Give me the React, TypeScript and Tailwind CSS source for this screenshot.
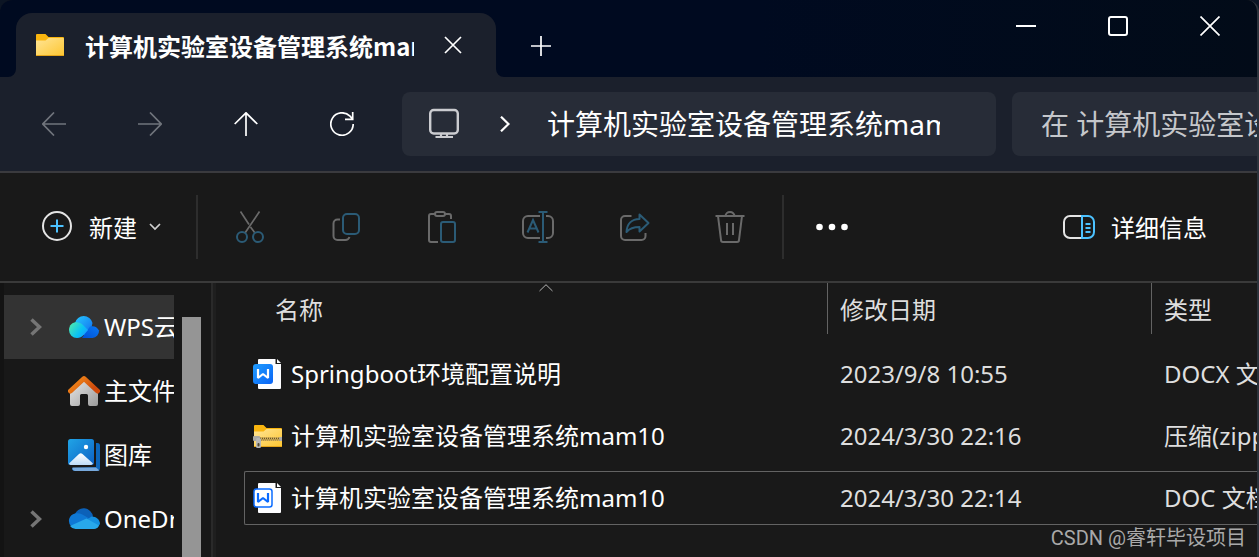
import type { ReactNode } from 'react';

const GRAY = '#6a6a6a';
const BLUE = '#2b5b76';

function Icon({ w = 32, h = 32, children }: { w?: number; h?: number; children: ReactNode }) {
  return (
    <svg
      width={w}
      height={h}
      viewBox={`0 0 ${w} ${h}`}
      fill="none"
      stroke="currentColor"
      strokeWidth="2"
      className="block shrink-0"
      aria-hidden="true"
    >
      {children}
    </svg>
  );
}

function FolderIcon({ zipped = false, id }: { zipped?: boolean; id: string }) {
  return (
    <svg width="30" height="24" viewBox="0 0 30 24" className="block shrink-0" aria-hidden="true">
      <defs>
        <linearGradient id={id} x1="0" y1="0" x2="1" y2="1">
          <stop offset="0" stopColor="#ffe596" />
          <stop offset="1" stopColor="#fdc631" />
        </linearGradient>
      </defs>
      <path d="M1 2a1 1 0 0 1 1-1h8.500l3 3H28a1 1 0 0 1 1 1v8H1z" fill="#f9b50f" />
      <path d="M1 7.500h9.500L13.500 5H28a1 1 0 0 1 1 1v16a1 1 0 0 1-1 1H2a1 1 0 0 1-1-1z" fill={`url(#${id})`} />
      <path d="M1 22.500h28" stroke="#e5a51a" />
      {zipped && (
        <>
          <path d="M6 15h23" stroke="#d9b357" strokeWidth="4" />
          <path d="M7 14.500h20" stroke="#67562b" strokeWidth="1.500" strokeDasharray="1 1" />
          <path d="M8 16h19" stroke="#8d7840" strokeWidth="1" strokeDasharray="1 1" />
          <rect x="26.500" y="13" width="2.500" height="4" fill="#a9a9a9" />
          <rect x="0" y="12" width="7" height="5" rx="1" fill="#aaa9a4" />
          <rect x="3" y="14" width="5" height="10" rx="1.500" fill="#b8b8b6" />
          <rect x="4.500" y="19" width="2" height="3.500" rx="1" fill="#4f4934" />
        </>
      )}
    </svg>
  );
}

function DocIcon({ outlined = false }: { outlined?: boolean }) {
  return (
    <svg width="30" height="32" viewBox="0 0 30 32" className="block shrink-0" aria-hidden="true">
      <defs>
        <linearGradient id="docBlue" x1="0" y1="0" x2="1" y2="1">
          <stop offset="0" stopColor="#1f9dff" />
          <stop offset="1" stopColor="#0a63f5" />
        </linearGradient>
      </defs>
      <path d="M5 2a1 1 0 0 1 1-1h16.500v5h5.500v24a1 1 0 0 1-1 1H6a1 1 0 0 1-1-1z" fill="#fdfdff" />
      <path d="M24 1v4h4z" fill="#fdfdff" />
      {outlined ? (
        <rect x="1" y="7" width="18" height="18" rx="2.500" fill="#fff" stroke="#0a6bff" strokeWidth="1.500" />
      ) : (
        <rect x="0" y="6" width="20" height="20" rx="3" fill="url(#docBlue)" />
      )}
      <path
        d="M5 11v9l5-4 5 4v-9"
        fill="none"
        stroke={outlined ? '#0a6bff' : '#fff'}
        strokeWidth="2.200"
        strokeLinejoin="bevel"
      />
    </svg>
  );
}

function WpsCloudIcon() {
  return (
    <svg width="32" height="32" viewBox="0 0 32 32" className="block shrink-0" aria-hidden="true">
      <defs>
        <linearGradient id="wpsA" x1="0" y1="0" x2="1" y2="1">
          <stop offset="0" stopColor="#24c9ff" />
          <stop offset="1" stopColor="#1268ee" />
        </linearGradient>
        <linearGradient id="wpsB" x1="0" y1="0" x2="1" y2="0.600">
          <stop offset="0" stopColor="#55eca5" />
          <stop offset="0.700" stopColor="#08c2f5" />
          <stop offset="1" stopColor="#18a0ff" />
        </linearGradient>
        <linearGradient id="wpsC" x1="0" y1="1" x2="1" y2="0">
          <stop offset="0" stopColor="#0050d5" />
          <stop offset="1" stopColor="#0878f5" />
        </linearGradient>
      </defs>
      <path d="M7 12a9 9 0 0 1 17.500 0l-3 12H12z" fill="url(#wpsA)" />
      <path d="M14 27l8-11.500a8 8 0 0 1 9 4A7 7 0 0 1 24.500 27z" fill="url(#wpsC)" />
      <path d="M9 27a8 8 0 0 1-8-8c0-8 9-10 14-5l5 5-5 5.500C13.500 26 12 27 9 27z" fill="url(#wpsB)" />
    </svg>
  );
}

function HomeIcon() {
  return (
    <svg width="32" height="32" viewBox="0 0 32 32" className="block shrink-0" aria-hidden="true">
      <defs>
        <linearGradient id="roof" x1="0" y1="0" x2="1" y2="0.500">
          <stop offset="0" stopColor="#f7931c" />
          <stop offset="1" stopColor="#cf4a0c" />
        </linearGradient>
        <linearGradient id="wall" x1="0" y1="0" x2="1" y2="1">
          <stop offset="0" stopColor="#ececec" />
          <stop offset="1" stopColor="#9b9b9b" />
        </linearGradient>
      </defs>
      <path
        d="M2 15.500L16 3l14 12.500V29a2 2 0 0 1-2 2h-6a2 2 0 0 1-2-2V20.500a1.500 1.500 0 0 0-1.500-1.500h-5a1.500 1.500 0 0 0-1.500 1.500V29a2 2 0 0 1-2 2H4a2 2 0 0 1-2-2z"
        fill="url(#wall)"
      />
      <path d="M2.500 16L16 3.500 29.500 16" fill="none" stroke="url(#roof)" strokeWidth="5" strokeLinejoin="round" strokeLinecap="round" />
    </svg>
  );
}

function GalleryIcon() {
  return (
    <svg width="32" height="32" viewBox="0 0 32 32" className="block shrink-0" aria-hidden="true">
      <defs>
        <linearGradient id="pic" x1="0" y1="0" x2="1" y2="1">
          <stop offset="0" stopColor="#20a4e6" />
          <stop offset="1" stopColor="#0d62c5" />
        </linearGradient>
        <linearGradient id="mount" x1="0" y1="0" x2="0" y2="1">
          <stop offset="0" stopColor="#ffffff" />
          <stop offset="1" stopColor="#bfdcf8" />
        </linearGradient>
      </defs>
      <path d="M28 4h1.500A2.500 2.500 0 0 1 32 6.500V29a3 3 0 0 1-3 3H7a3 3 0 0 1-3-3l24-1z" fill="#0c66bb" />
      <path d="M4.500 28.500H28l3.500 3L29 32H7a3 3 0 0 1-2.500-3.500z" fill="#78a9dc" />
      <rect x="0" y="0" width="28" height="28" fill="#191919" />
      <rect x="0" y="0" width="26" height="26" rx="2.500" fill="url(#pic)" />
      <path d="M1 24.500L11 15a2.500 2.500 0 0 1 3.500 0l10.500 9.500q-1 1.500-2.500 1.500H3q-1.500 0-2-1.500z" fill="url(#mount)" />
      <circle cx="18" cy="8" r="2.200" fill="#fff" />
    </svg>
  );
}

function OneDriveIcon() {
  return (
    <svg width="32" height="32" viewBox="0 0 32 32" className="block shrink-0" aria-hidden="true">
      <path d="M6.500 12A9.500 9.500 0 0 1 25 13.500L19 19z" fill="#0c61b8" />
      <path d="M3 23a7.500 7.500 0 0 1 4-12.500c4-.8 7 .5 10 2.500l5 3-12 7z" fill="#0f78d4" />
      <path d="M17 18l6.500-4.500c5 0 8.500 3.500 8.500 7.500l-3 4z" fill="#1590df" />
      <path d="M2 23l16.500-7.500L31 22.500A6 6 0 0 1 26 26H7.500A7 7 0 0 1 2 23z" fill="#28a8ea" />
    </svg>
  );
}

const navButtons: { label: string; dim?: boolean; art: ReactNode }[] = [
  { label: '后退', dim: true, art: <path d="M12 .5L.8 12 12 23.500M1 12h23" strokeWidth="1.700" /> },
  { label: '前进', dim: true, art: <path d="M12 .5L23.200 12 12 23.500M23 12H0" strokeWidth="1.700" /> },
  { label: '向上', art: <path d="M.7 12L12 .8 23.300 12M12 1v23" strokeWidth="1.700" /> },
  {
    label: '刷新',
    art: <path d="M23.200 12A11.200 11.200 0 1 1 20 4.200L22.500 7M22.700 0v7.300H15" strokeWidth="1.700" />,
  },
];

const tools: { label: string; art: ReactNode }[] = [
  {
    label: '剪切',
    art: (
      <>
        <path d="M6.500 .5l8.500 13M16.500 16l4.500 6M25.500 .5L11 22" stroke={GRAY} strokeWidth="1.700" />
        <circle cx="8" cy="26" r="5" stroke={BLUE} />
        <circle cx="24" cy="26" r="5" stroke={BLUE} />
      </>
    ),
  },
  {
    label: '复制',
    art: (
      <>
        <path d="M10 8.500H7.500a4 4 0 0 0-4 4V25a4 4 0 0 0 4 4H15a4.500 4.500 0 0 0 4.500-3" stroke={GRAY} />
        <rect x="13" y="3" width="16" height="20" rx="4" stroke={BLUE} />
      </>
    ),
  },
  {
    label: '粘贴',
    art: (
      <>
        <path d="M9 3H5a2 2 0 0 0-2 2v24a2 2 0 0 0 2 2h7M19 3h4a2 2 0 0 1 2 2v3" stroke={GRAY} />
        <rect x="9" y="1" width="10" height="4" rx="2" stroke={GRAY} />
        <rect x="15" y="11" width="14" height="20" rx="2" stroke={BLUE} />
      </>
    ),
  },
  {
    label: '重命名',
    art: (
      <>
        <path d="M18 5H6a5 5 0 0 0-5 5v12a5 5 0 0 0 5 5h12M24 5h2a5 5 0 0 1 5 5v12a5 5 0 0 1-5 5h-2" stroke={GRAY} />
        <path d="M16.500 1h9M21 1v30M16.500 31h9M5.500 21.500L11 9l5.500 12.500M7.500 17.500h7" stroke={BLUE} />
      </>
    ),
  },
  {
    label: '共享',
    art: (
      <>
        <path d="M13.500 5H7a4 4 0 0 0-4 4v16a4 4 0 0 0 4 4h16.500a4 4 0 0 0 4-4v-3" stroke={GRAY} />
        <path d="M21.500 3.500l9 8.500-9 8.500V16C15.500 16 11.500 17.500 8.500 21c.5-8 5-13 13-13z" stroke={BLUE} strokeLinejoin="round" />
      </>
    ),
  },
  {
    label: '删除',
    art: (
      <path
        d="M1.500 5h29M11.500 5a4.500 4 0 0 1 9 0M4 5l3 24a2 2 0 0 0 2 2h14a2 2 0 0 0 2-2l3-24M13 12v12M19 12v12"
        stroke={GRAY}
      />
    ),
  },
];

const places = [
  { name: 'WPS云盘', icon: <WpsCloudIcon />, expandable: true, active: true },
  { name: '主文件夹', icon: <HomeIcon /> },
  { name: '图库', icon: <GalleryIcon /> },
  { name: 'OneDrive', icon: <OneDriveIcon />, expandable: true },
];

const files = [
  { name: 'Springboot环境配置说明', date: '2023/9/8 10:55', type: 'DOCX 文档', icon: <DocIcon /> },
  { name: '计算机实验室设备管理系统mam10', date: '2024/3/30 22:16', type: '压缩(zipped)文件夹', icon: <FolderIcon zipped id="zipFolder" /> },
  { name: '计算机实验室设备管理系统mam10', date: '2024/3/30 22:14', type: 'DOC 文档', icon: <DocIcon outlined />, focused: true },
];

function TitleBar() {
  return (
    <header className="flex h-[77px] bg-linear-to-r from-[#000a20] from-60% to-[#020b18] pl-4">
      <div className="relative mt-[13px] flex h-16 w-[480px] shrink-0 items-center rounded-t-2xl bg-[#1b202c] pl-[19px]">
        <svg width="8" height="8" viewBox="0 0 8 8" className="absolute bottom-0 -left-2" aria-hidden="true">
          <path d="M8 0a8 8 0 0 1-8 8h8z" fill="#1b202c" />
        </svg>
        <svg width="8" height="8" viewBox="0 0 8 8" className="absolute -right-2 bottom-0" aria-hidden="true">
          <path d="M0 0a8 8 0 0 0 8 8H0z" fill="#1b202c" />
        </svg>
        <FolderIcon id="tabFolder" />
        <span className="ml-5 w-[329px] overflow-hidden pt-0.5 font-['Noto_Sans_CJK_SC',sans-serif] text-2xl font-bold whitespace-nowrap text-white">
          计算机实验室设备管理系统mam10
        </span>
        <button type="button" aria-label="关闭标签页" className="ml-[15px] flex size-12 items-center justify-center text-white">
          <Icon w={18} h={18}>
            <path d="M1 1l16 16M17 1L1 17" strokeWidth="1.700" />
          </Icon>
        </button>
      </div>
      <button type="button" aria-label="新建标签页" className="mt-[22px] ml-[21px] flex size-12 items-center justify-center text-white">
        <Icon w={20} h={20}>
          <path d="M10 0v20M0 10h20" strokeWidth="1.700" />
        </Icon>
      </button>
      <div className="ml-auto flex pr-px text-white">
        <button type="button" aria-label="最小化" className="flex h-[52px] w-[92px] items-center justify-center">
          <Icon w={20} h={20}>
            <path d="M0 10h20" />
          </Icon>
        </button>
        <button type="button" aria-label="最大化" className="flex h-[52px] w-[92px] items-center justify-center">
          <Icon w={20} h={20}>
            <rect x="1" y="1" width="18" height="18" rx="2" />
          </Icon>
        </button>
        <button type="button" aria-label="关闭" className="flex h-[52px] w-[92px] items-center justify-center">
          <Icon w={20} h={20}>
            <path d="M.5 .5l19 19M19.500 .5l-19 19" strokeWidth="1.700" />
          </Icon>
        </button>
      </div>
    </header>
  );
}

function AddressBar() {
  return (
    <nav className="flex h-24 items-center border-b-2 border-[#3a3a3e] bg-[#1b202c] pl-[22px]">
      <div className="flex shrink-0 gap-8">
        {navButtons.map((b) => (
          <button
            key={b.label}
            type="button"
            aria-label={b.label}
            disabled={b.dim}
            className="flex h-16 w-16 items-center justify-center text-white disabled:text-[#70747c]"
          >
            <Icon w={24} h={24}>{b.art}</Icon>
          </button>
        ))}
      </div>
      <div className="ml-7 flex h-16 min-w-0 flex-1 items-center rounded-lg bg-[#272c37] pr-14 pl-[26px] text-white">
        <button type="button" aria-label="此电脑" className="text-[#cbccd0]">
          <Icon>
            <rect x="2.200" y="2" width="27.600" height="23.500" rx="3.500" strokeWidth="2.400" />
            <path d="M13 25.500v3M19 25.500v3M7.500 29h17.500" strokeWidth="2.200" />
          </Icon>
        </button>
        <span className="ml-10 shrink-0">
          <Icon w={10} h={16}>
            <path d="M1 .7L8.500 8 1 15.300" strokeWidth="2.200" />
          </Icon>
        </span>
        <button type="button" className="ml-[37px] min-w-0 flex-1 overflow-hidden text-left text-[28px] leading-10 whitespace-nowrap">
          计算机实验室设备管理系统mam10
        </button>
      </div>
      <input
        type="text"
        aria-label="搜索"
        placeholder="在 计算机实验室设备管理系统mam10 中搜索"
        className="ml-4 h-16 w-[245px] shrink-0 rounded-l-lg bg-[#272c37] pl-[29px] text-[28px] text-white outline-none placeholder:text-[#c5c7cb]"
      />
    </nav>
  );
}

function Toolbar() {
  return (
    <div role="toolbar" className="flex h-[110px] items-center border-b-2 border-[#3a3a3a] bg-[#191919] text-2xl text-white">
      <button type="button" className="ml-[41px] flex items-center">
        <Icon>
          <circle cx="16" cy="15" r="14" stroke="#e4e4e4" />
          <path d="M16 8.500v13M9.500 15h13" stroke="#4cc2ff" />
        </Icon>
        <span className="ml-4 pt-0.5 leading-9">新建</span>
        <span className="ml-3 text-[#cfcfcf]">
          <Icon w={12} h={8}>
            <path d="M1 1l5 5 5-5" strokeWidth="1.700" />
          </Icon>
        </span>
      </button>
      <div className="ml-[35px] h-16 w-0.5 bg-[#2d2d2d]" />
      <div className="ml-5 flex gap-8">
        {tools.map((t) => (
          <button key={t.label} type="button" disabled aria-label={t.label} className="flex size-16 items-center justify-center">
            <Icon>{t.art}</Icon>
          </button>
        ))}
      </div>
      <div className="ml-5 h-16 w-0.5 bg-[#2d2d2d]" />
      <button type="button" aria-label="查看更多" className="ml-4 flex size-16 items-center justify-center">
        <Icon>
          <g fill="#fff" stroke="none">
            <circle cx="3.500" cy="16" r="3.300" />
            <circle cx="16" cy="16" r="3.300" />
            <circle cx="28.500" cy="16" r="3.300" />
          </g>
        </Icon>
      </button>
      <button type="button" className="mr-[50px] ml-auto flex items-center">
        <Icon>
          <path d="M18 5H7a6 6 0 0 0-6 6v10a6 6 0 0 0 6 6h11" stroke="#e4e4e4" />
          <path d="M19 5h6a6 6 0 0 1 6 6v10a6 6 0 0 1-6 6h-6zM22.500 13h5M22.500 17h5M22.500 21h5" stroke="#4cc2ff" />
        </Icon>
        <span className="ml-4 pt-0.5 leading-9">详细信息</span>
      </button>
    </div>
  );
}

function Sidebar() {
  return (
    <aside className="flex w-[213px] shrink-0 border-r-2 border-l-4 border-r-[#2a2a2a] border-l-[#131313] bg-[#181818]">
      <ul className="mt-3 w-[170px] overflow-hidden">
        {places.map((p) => (
          <li key={p.name}>
            <a
              href="#"
              className={
                p.active
                  ? 'flex h-16 items-center bg-[#333333] text-2xl whitespace-nowrap text-white'
                  : 'flex h-16 items-center text-2xl whitespace-nowrap text-white'
              }
            >
              <span className="flex w-16 shrink-0 items-center pl-[26px] text-[#757575]">
                {p.expandable && (
                  <Icon w={12} h={18}>
                    <path d="M1.500 1.500L9.500 9l-8 7.500" strokeWidth="3.500" />
                  </Icon>
                )}
              </span>
              {p.icon}
              <span className="ml-1">{p.name}</span>
            </a>
          </li>
        ))}
      </ul>
      <div className="mt-[34px] ml-2 w-[19px] bg-[#959595]" />
    </aside>
  );
}

function FileList() {
  return (
    <main className="relative min-w-0 flex-1 overflow-hidden border-l-3 border-[#1f1f1f] bg-[#191919] pl-7">
      <table className="w-full table-fixed border-collapse text-left text-2xl whitespace-nowrap">
        <colgroup>
          <col className="w-[584px]" />
          <col className="w-[324px]" />
          <col />
        </colgroup>
        <thead>
          <tr className="h-[60px] align-top text-[#dedede]">
            <th className="relative p-0 font-normal" aria-sort="ascending">
              <div className="flex h-[51px] items-center border-r border-[#636363] pt-0.5 pl-[31px]">名称</div>
              <span className="absolute top-px left-[295px] text-[#b5b5b5]">
                <Icon w={14} h={8}>
                  <path d="M.5 7L7 .7 13.500 7" strokeWidth="1" />
                </Icon>
              </span>
            </th>
            <th className="p-0 font-normal">
              <div className="flex h-[51px] items-center border-r border-[#636363] pt-0.5 pl-3">修改日期</div>
            </th>
            <th className="p-0 font-normal">
              <div className="flex h-[51px] items-center pt-0.5 pl-3">类型</div>
            </th>
          </tr>
        </thead>
        <tbody>
          {files.map((f) => {
            const edge = f.focused ? 'border-[#636363]' : 'border-transparent';
            return (
              <tr key={f.name + f.date} className="h-[62px]">
                <td className="p-0">
                  <div className={`${edge} flex h-[54px] items-center rounded-l-xs border-y border-l pl-2 text-white`}>
                    <span className="w-[38px] shrink-0">{f.icon}</span>
                    {f.name}
                  </div>
                </td>
                <td className="p-0">
                  <div className={`${edge} flex h-[54px] items-center border-y pl-3 text-[#dedede]`}>{f.date}</div>
                </td>
                <td className="overflow-hidden p-0">
                  <div className={`${edge} flex h-[54px] items-center border-y pl-3 text-[#dedede]`}>{f.type}</div>
                </td>
              </tr>
            );
          })}
        </tbody>
      </table>
      <p className="absolute right-[11px] bottom-[5px] font-[Roboto,'Noto_Sans_CJK_SC',sans-serif] text-xl leading-7 text-[#a9a9a9]">
        CSDN @睿轩毕设项目
      </p>
    </main>
  );
}

export default function App() {
  return (
    <div className="min-h-screen bg-[#0c1524] font-['Noto_Sans','Noto_Sans_CJK_SC',sans-serif]">
      <div className="flex min-h-screen flex-col overflow-hidden rounded-t-xl border-r-2 border-[#2c323b] bg-[#191919]">
        <TitleBar />
        <AddressBar />
        <Toolbar />
        <div className="flex flex-1">
          <Sidebar />
          <FileList />
        </div>
      </div>
    </div>
  );
}
